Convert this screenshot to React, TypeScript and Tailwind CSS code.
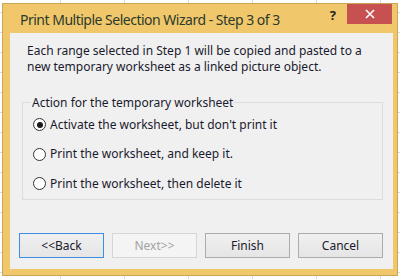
import React from 'react';

const options = [
    'Activate the worksheet, but don\'t print it',
    'Print the worksheet, and keep it.',
    'Print the worksheet, then delete it',
];

const Radio: React.FC<{ checked: boolean; label: string }> = ({ checked, label }) => (
    <label className="flex items-center h-[15px]">
        <span className="w-[13px] h-[13px] rounded-full border border-[#333333] bg-white flex items-center justify-center">
            {checked && <span className="w-[6px] h-[6px] rounded-full bg-[#1a1a1a]" />}
        </span>
        <span className="ml-[4px] text-[12px] text-[#1a1a2e]">{label}</span>
    </label>
);

const Button: React.FC<{ label: string; focused?: boolean; disabled?: boolean }> = ({ label, focused, disabled }) => (
    <button
        className={
            'w-[85px] h-[25px] text-[12px] border bg-[linear-gradient(to_bottom,#f0f0f0,#e5e5e5)] ' +
            (focused
                ? 'border-[#3c8ee5] text-[#1a1a2e]'
                : disabled
                ? 'border-[#d5d5d5] bg-none bg-[#f4f4f4] text-[#a3a3a3]'
                : 'border-[#acacac] text-[#1a1a2e]')
        }
    >
        {label}
    </button>
);

const App: React.FC = () => {
    return (
        <div className="w-[400px] h-[279px] overflow-hidden bg-white bg-[linear-gradient(to_right,#dadada_1px,transparent_1px),linear-gradient(to_bottom,#dadada_1px,transparent_1px)] [background-size:64px_20px] [background-position:60px_12px] pt-[3px] pl-[2px] font-['Noto_Sans',sans-serif]">
            <div className="w-[396px] h-[273px] border border-[#c9a654] bg-[#f0c86b] flex flex-col">
                {/* title bar */}
                <div className="h-[29px] flex items-start">
                    <div className="pl-[17px] pt-[6px] text-[14px] tracking-[-0.5px] leading-[19px] text-[#2d3a2d]">
                        Print Multiple Selection Wizard - Step 3 of 3
                    </div>
                    <div className="ml-auto pt-[4px] pr-[11px] text-[13px] font-bold leading-[14px] text-[#222]">?</div>
                    <div className="mr-[5px] w-[45px] h-[20px] bg-[#c75050] flex items-center justify-center">
                        <svg width="10" height="10" viewBox="0 0 10 10">
                            <path d="M1 1 L9 9 M9 1 L1 9" stroke="white" strokeWidth="1.6" />
                        </svg>
                    </div>
                </div>

                {/* content */}
                <div className="ml-[7px] mr-[4px] h-[236px] bg-[#f0f0f0] flex flex-col">
                    <div className="pl-[17px] pt-[10px] text-[12px] leading-[16px] text-[#1a1a2e]">
                        <p>Each range selected in Step 1 will be copied and pasted to a</p>
                        <p>new temporary worksheet as a linked picture object.</p>
                    </div>

                    <fieldset className="mt-[21px] ml-[12px] w-[361px] h-[104px] border border-[#dcdcdc] pl-[10px] pt-[8px] flex flex-col gap-[14.5px]">
                        <legend className="ml-[-2px] px-[1px] text-[12px] leading-[13px] text-[#1a1a2e]">
                            Action for the temporary worksheet
                        </legend>
                        {options.map((o, i) => (
                            <Radio key={o} label={o} checked={i === 0} />
                        ))}
                    </fieldset>

                    <div className="mt-[33px] ml-[9px] flex gap-[8px]">
                        <Button label="<<Back" focused />
                        <Button label="Next>>" disabled />
                        <Button label="Finish" />
                        <Button label="Cancel" />
                    </div>
                </div>
            </div>
        </div>
    );
};

export default App;
